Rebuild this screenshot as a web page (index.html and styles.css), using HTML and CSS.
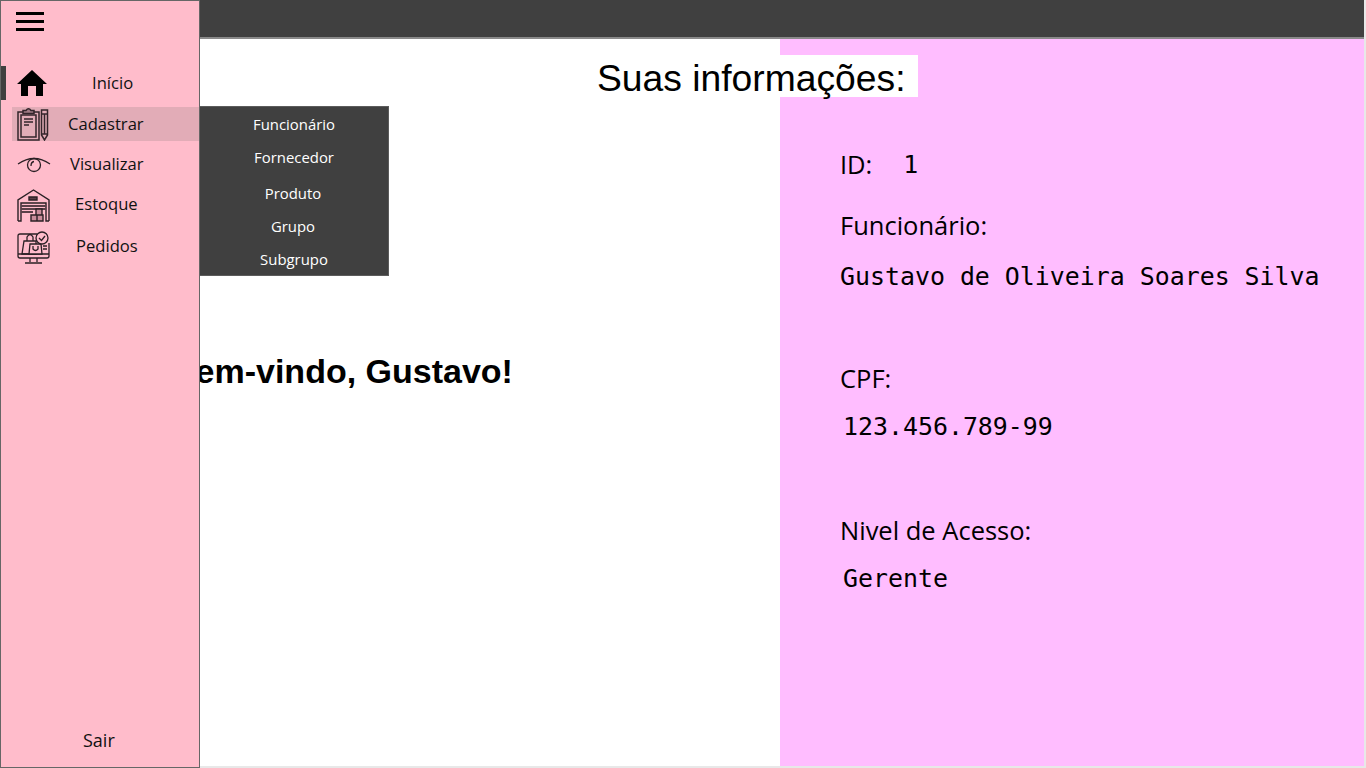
FILE: index.html
```html
<!DOCTYPE html>
<html lang="pt-BR">
<head>
<meta charset="utf-8">
<title>Suas informações</title>
<link rel="stylesheet" href="styles.css">
</head>
<body>
<div class="page">
  <header class="topbar"></header>
  <main class="content">
    <section class="welcome">
      <h2 class="welcome-text">Bem-vindo, Gustavo!</h2>
    </section>
    <section class="info">
      <h1 class="info-title">Suas informações:</h1>
      <div class="field field-id"><span class="label">ID:</span><span class="value value-id">1</span></div>
      <div class="field field-name"><div class="label">Funcionário:</div><div class="value">Gustavo de Oliveira Soares Silva</div></div>
      <div class="field field-cpf"><div class="label">CPF:</div><div class="value value-in">123.456.789-99</div></div>
      <div class="field field-level"><div class="label">Nivel de Acesso:</div><div class="value value-in">Gerente</div></div>
    </section>
  </main>
</div>
<nav class="sidebar">
  <div class="burger"><span></span><span></span><span></span></div>
  <ul class="menu">
    <li class="item item-home">
      <svg class="icon" viewBox="0 0 30 27" width="30" height="27"><path d="M15 0 L30 14 H26 V26 H19 V16 H11 V26 H4 V14 H0 Z" fill="#000"/></svg>
      <span class="item-label label-home">Início</span>
    </li>
    <li class="item item-active">
      <svg class="icon" viewBox="0 0 32 34" width="32" height="34" fill="none" stroke="#33252b" stroke-width="1.500"><path d="M1 5 H22 V33 H1 Z M4 8 H19 V30 H4 Z"/><path d="M6 6.500 V3.500 H9 Q11.500 0 14 3.500 H17 V6.500 Z" fill="#a07a85"/><path d="M7 12 H16 M7 15 H16 M7 18 H12"/><path d="M24.500 3 H30.500 V28 L27.500 33 L24.500 28 Z M24.500 7 H30.500 M24.500 27 H30.500 M27.500 7 V27"/></svg>
      <span class="item-label label-cadastrar">Cadastrar</span>
    </li>
    <li class="item item-view">
      <svg class="icon" viewBox="0 0 34 18" width="34" height="18" fill="none" stroke="#2b2025" stroke-width="1.300"><path d="M1 8 Q17 -3 33 8"/><circle cx="17" cy="9" r="6.500"/><path d="M14 10 Q14 6 17 5.500"/></svg>
      <span class="item-label label-view">Visualizar</span>
    </li>
    <li class="item item-stock">
      <svg class="icon" viewBox="0 0 33 33" width="33" height="33" fill="none" stroke="#2b2025" stroke-width="1.400"><path d="M1 32 V11 L16.500 1 L32 11 V32"/><path d="M1 32 H4 V14 H29 V32 H32"/><path d="M12 8 H20 V11 H12 Z" fill="#5a4048"/><path d="M4 17 H29 M4 20 H29 M4 23 H16" stroke="#5a4048" stroke-width="1.800"/><path d="M14 26 H20 V32 H14 Z M20 26 H26 V32 H20 Z M19 20 H25 V26 H19 Z" fill="#c98d9b"/></svg>
      <span class="item-label label-stock">Estoque</span>
    </li>
    <li class="item item-orders">
      <svg class="icon" viewBox="0 0 33 33" width="33" height="33" fill="none" stroke="#2b2025" stroke-width="1.300"><path d="M20 3 H3 Q1 3 1 5 V25 Q1 27 3 27 H30 Q32 27 32 25 V12"/><path d="M1 23 H32 M13 27 V31 M20 27 V31 M8 32 H25"/><path d="M7 10 H19 V23 H5 Z"/><path d="M10 10 V6 Q13 1 16 6 V10"/><path d="M13 13 H24 L25 23 H12 Z" fill="#ffbccb"/><path d="M16 15 V18 Q18.500 21 21 18 V15"/><circle cx="25" cy="7" r="6" fill="#ffbccb"/><path d="M22 7 L24.500 9.500 L28 5"/><path d="M26 15 H30 M26 18 H30"/></svg>
      <span class="item-label label-orders">Pedidos</span>
    </li>
  </ul>
  <div class="logout">Sair</div>
</nav>
<div class="submenu">
  <div class="sub sub-a">Funcionário</div>
  <div class="sub sub-b">Fornecedor</div>
  <div class="sub sub-c">Produto</div>
  <div class="sub sub-d">Grupo</div>
  <div class="sub sub-e">Subgrupo</div>
</div>
</body>
</html>
```
FILE: styles.css
```css
* { box-sizing: border-box; }
html, body { margin: 0; padding: 0; height: 100%; overflow: hidden; background: #fff; }
body { font-family: "Open Sans", "Noto Sans", sans-serif; color: #000; }

.page { display: flex; flex-direction: column; height: 768px; width: 1366px; border-right: 2px solid #e8e8e8; border-bottom: 2px solid #e8e8e8; }
.topbar { height: 39px; flex: none; background: #404040; border-bottom: 2px solid #8a8a8a; }
.content { flex: 1; display: flex; min-height: 0; }

.welcome { width: 780px; flex: none; background: #fff; padding: 312px 0 0 171px; }
.welcome-text { margin: 0; font: bold 34px/40px "Liberation Sans", Arial, sans-serif; white-space: nowrap; }

.info { flex: 1; background: #ffbdff; position: relative; padding-left: 60px; color: #000; }
.info-title { position: absolute; left: -190px; top: 16px; margin: 0; padding: 2px 12px 0 7px; height: 42px; background: #fff; font: 400 37.250px/42px "Liberation Sans", Arial, sans-serif; white-space: nowrap; }

.label { font-size: 25.500px; line-height: 33px; }
.value { font: 400 24.900px/33px "DejaVu Sans Mono", "Liberation Mono", monospace; white-space: nowrap; }
.field-id { padding-top: 109px; display: flex; align-items: center; }
.value-id { margin-left: 31px; }
.field-name { margin-top: 28px; }
.field-name .value { margin-top: 18px; }
.field-cpf { margin-top: 69px; }
.field-level { margin-top: 71px; }
.field-cpf .value, .field-level .value { margin-top: 15px; }
.value-in { padding-left: 3px; }

.sidebar { position: absolute; left: 0; top: 0; width: 200px; height: 768px; background: #ffbccb; border: 1px solid #666; }
.burger { position: absolute; left: 15px; top: 11px; width: 28px; height: 19px; display: flex; flex-direction: column; justify-content: space-between; }
.burger span { display: block; height: 3px; background: #000; }
.menu { list-style: none; margin: 0; padding: 0; }
.item { position: absolute; left: 0; right: 0; font-size: 16.600px; line-height: 22px; color: #111; }
.icon { position: absolute; display: block; }
.item-label { position: absolute; white-space: nowrap; }
.item-home { top: 65px; height: 34px; border-left: 5px solid #404040; }
.item-home .icon { left: 11px; top: 4px; }
.label-home { left: 86px; top: 6px; }
.item-active { top: 106px; height: 34px; left: 11px; background: #e2acb7; }
.item-active .icon { left: 5px; top: 0; }
.label-cadastrar { left: 56px; top: 6px; }
.item-view { top: 155px; height: 18px; }
.item-view .icon { left: 16px; top: 0; }
.label-view { left: 69px; top: -3px; }
.item-stock { top: 188px; height: 33px; }
.item-stock .icon { left: 16px; top: 0; }
.label-stock { left: 74px; top: 4px; }
.item-orders { top: 230px; height: 33px; }
.item-orders .icon { left: 16px; top: 0; }
.label-orders { left: 75px; top: 4px; }
.logout { position: absolute; left: 82px; top: 727px; font-size: 18px; line-height: 24px; color: #111; }

.submenu { position: absolute; left: 200px; top: 106px; width: 189px; height: 170px; background: #404040; border: 1px solid #5c5c5c; border-left: 0; color: #fff; font-size: 14.900px; line-height: 20px; text-align: center; }
.sub { position: absolute; left: 0; right: 0; white-space: nowrap; }
.sub-a { top: 7px; }
.sub-b { top: 40px; }
.sub-c { top: 76px; padding-right: 2px; }
.sub-d { top: 109px; padding-right: 2px; }
.sub-e { top: 142px; }
```
